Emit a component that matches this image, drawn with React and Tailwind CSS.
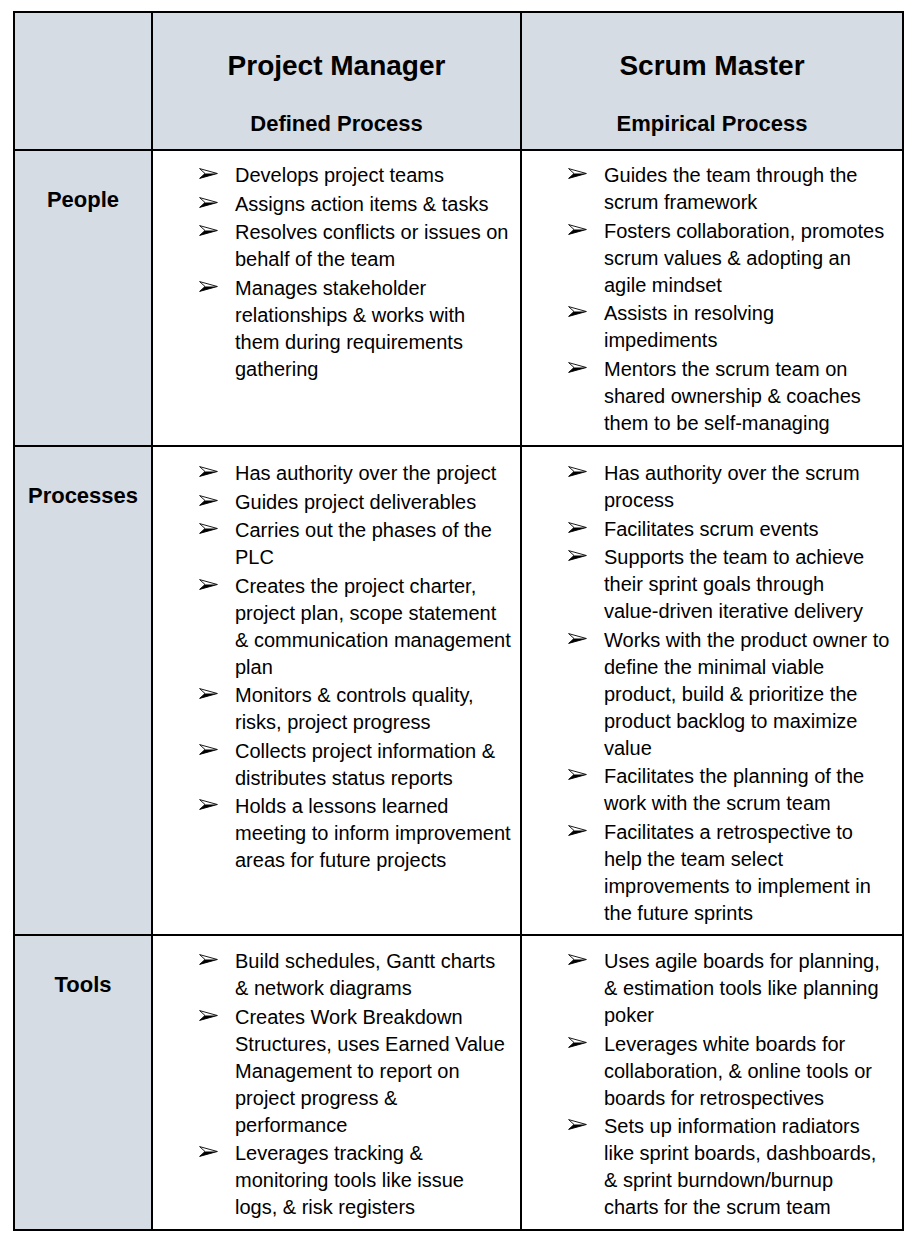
import React from 'react';

const rows = [
    {
        label: 'People',
        pad: 'pt-[11px]',
        pm: [
            ['Develops project teams'],
            ['Assigns action items & tasks'],
            ['Resolves conflicts or issues on', 'behalf of the team'],
            ['Manages stakeholder', 'relationships & works with', 'them during requirements', 'gathering'],
        ],
        sm: [
            ['Guides the team through the', 'scrum framework'],
            ['Fosters collaboration, promotes', 'scrum values & adopting an', 'agile mindset'],
            ['Assists in resolving', 'impediments'],
            ['Mentors the scrum team on', 'shared ownership & coaches', 'them to be self-managing'],
        ],
    },
    {
        label: 'Processes',
        pad: 'pt-[13px]',
        pm: [
            ['Has authority over the project'],
            ['Guides project deliverables'],
            ['Carries out the phases of the', 'PLC'],
            ['Creates the project charter,', 'project plan, scope statement', '& communication management', 'plan'],
            ['Monitors & controls quality,', 'risks, project progress'],
            ['Collects project information &', 'distributes status reports'],
            ['Holds a lessons learned', 'meeting to inform improvement', 'areas for future projects'],
        ],
        sm: [
            ['Has authority over the scrum', 'process'],
            ['Facilitates scrum events'],
            ['Supports the team to achieve', 'their sprint goals through', 'value-driven iterative delivery'],
            ['Works with the product owner to', 'define the minimal viable', 'product, build & prioritize the', 'product backlog to maximize', 'value'],
            ['Facilitates the planning of the', 'work with the scrum team'],
            ['Facilitates a retrospective to', 'help the team select', 'improvements to implement in', 'the future sprints'],
        ],
    },
    {
        label: 'Tools',
        pad: 'pt-[12px]',
        pm: [
            ['Build schedules, Gantt charts', '& network diagrams'],
            ['Creates Work Breakdown', 'Structures, uses Earned Value', 'Management to report on', 'project progress &', 'performance'],
            ['Leverages tracking &', 'monitoring tools like issue', 'logs, & risk registers'],
        ],
        sm: [
            ['Uses agile boards for planning,', '& estimation tools like planning', 'poker'],
            ['Leverages white boards for', 'collaboration, & online tools or', 'boards for retrospectives'],
            ['Sets up information radiators', 'like sprint boards, dashboards,', '& sprint burndown/burnup', 'charts for the scrum team'],
        ],
    },
];

function Arrowhead() {
    return (
        <svg width="19" height="11" viewBox="0 0 19 11" className="block">
            <path d="M0.6 0.6 L18.4 5.5 L0.6 10.4 L6 5.5 Z" fill="#fff" stroke="#000" strokeWidth="0.9" strokeLinejoin="miter" />
            <path d="M6 5.5 L18.4 5.5 L0.6 10.4 Z" fill="#000" />
        </svg>
    );
}

function BulletList({ items, pad }) {
    return (
        <ul className={`flex flex-col gap-[1.5px] pl-[46px] ${pad}`}>
            {items.map((lines, i) => (
                <li key={i} className="flex">
                    <span className="w-[36px] h-[27px] flex items-center shrink-0 -mt-[2px]">
                        <Arrowhead />
                    </span>
                    <span className="flex flex-col">
                        {lines.map((line, j) => (
                            <span key={j} className="whitespace-nowrap">{line}</span>
                        ))}
                    </span>
                </li>
            ))}
        </ul>
    );
}

export default function App() {
    return (
        <div className="min-h-[1252px] w-[920px] bg-white pt-[11px] pl-[13px] text-black font-['Liberation_Sans',Arial,sans-serif]">
            <div className="grid w-[891px] grid-cols-[136px_367px_380px] grid-rows-[136px_294px_487px_293px] gap-[2px] border-2 border-black bg-black text-[20px] leading-[27px]">
                <div className="bg-[#d6dce4]" />
                <div className="bg-[#d6dce4] flex flex-col items-center pt-[37px] font-bold">
                    <div className="text-[28px] leading-[32px]">Project Manager</div>
                    <div className="text-[22px] leading-[26px] mt-[29px]">Defined Process</div>
                </div>
                <div className="bg-[#d6dce4] flex flex-col items-center pt-[37px] font-bold">
                    <div className="text-[28px] leading-[32px]">Scrum Master</div>
                    <div className="text-[22px] leading-[26px] mt-[29px]">Empirical Process</div>
                </div>

                {rows.map((row) => (
                    <React.Fragment key={row.label}>
                        <div className="bg-[#d6dce4] pt-[36px] text-center text-[22px] leading-[26px] font-bold">
                            {row.label}
                        </div>
                        <div className="bg-white">
                            <BulletList items={row.pm} pad={row.pad} />
                        </div>
                        <div className="bg-white">
                            <BulletList items={row.sm} pad={row.pad} />
                        </div>
                    </React.Fragment>
                ))}
            </div>
        </div>
    );
}
